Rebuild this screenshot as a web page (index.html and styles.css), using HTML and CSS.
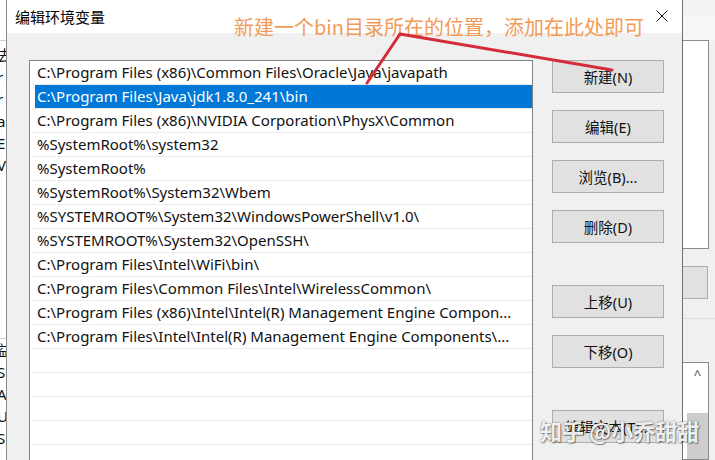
FILE: index.html
```html
<!DOCTYPE html>
<html lang="zh-CN">
<head>
  <meta charset="UTF-8" />
  <title>编辑环境变量</title>
  <link rel="stylesheet" href="styles.css">
</head>
<body>

  <div class="desktop">

    <!-- WINDOW BEHIND (LEFT EDGE) -->
    <div class="behind-left">
      <div class="behind-top"></div>
      <div class="frag cjk">去</div>
      <div class="frag">r</div>
      <div class="frag">r</div>
      <div class="frag">a</div>
      <div class="frag">E</div>
      <div class="frag">V</div>
      <div class="behind-gap"></div>
      <div class="frag cjk">益</div>
      <div class="frag">S</div>
      <div class="frag">A</div>
      <div class="frag">U</div>
      <div class="frag">S</div>
    </div>

    <!-- DIALOG -->
    <div class="dialog">
      <div class="titlebar">
        <span class="title">编辑环境变量</span>
        <span class="close">
          <svg width="12" height="12" viewBox="0 0 12 12">
            <path d="M0.5 0.5 L11.5 11.5 M11.5 0.5 L0.5 11.5" stroke="#111" stroke-width="1" fill="none" />
          </svg>
        </span>
      </div>

      <div class="dialog-body">
        <ul class="path-list">
          <li class="row"><span class="path">C:\Program Files (x86)\Common Files\Oracle\Java\javapath</span></li>
          <li class="row selected"><span class="path">C:\Program Files\Java\jdk1.8.0_241\bin</span></li>
          <li class="row"><span class="path">C:\Program Files (x86)\NVIDIA Corporation\PhysX\Common</span></li>
          <li class="row"><span class="path">%SystemRoot%\system32</span></li>
          <li class="row"><span class="path">%SystemRoot%</span></li>
          <li class="row"><span class="path">%SystemRoot%\System32\Wbem</span></li>
          <li class="row"><span class="path">%SYSTEMROOT%\System32\WindowsPowerShell\v1.0\</span></li>
          <li class="row"><span class="path">%SYSTEMROOT%\System32\OpenSSH\</span></li>
          <li class="row"><span class="path">C:\Program Files\Intel\WiFi\bin\</span></li>
          <li class="row"><span class="path">C:\Program Files\Common Files\Intel\WirelessCommon\</span></li>
          <li class="row"><span class="path">C:\Program Files (x86)\Intel\Intel(R) Management Engine Compon...</span></li>
          <li class="row"><span class="path">C:\Program Files\Intel\Intel(R) Management Engine Components\...</span></li>
          <li class="row"><span class="path"></span></li>
          <li class="row"><span class="path"></span></li>
          <li class="row"><span class="path"></span></li>
          <li class="row"><span class="path"></span></li>
          <li class="row"><span class="path"></span></li>
        </ul>

        <div class="actions">
          <button class="btn">新建(N)</button>
          <button class="btn">编辑(E)</button>
          <button class="btn">浏览(B)...</button>
          <button class="btn">删除(D)</button>
          <button class="btn btn-group">上移(U)</button>
          <button class="btn">下移(O)</button>
          <button class="btn btn-group">编辑文本(T)...</button>
        </div>
      </div>
    </div>

    <!-- WINDOW BEHIND (RIGHT EDGE) -->
    <div class="behind-right">
      <div class="behind-band"></div>
      <div class="behind-panel"></div>
      <div class="behind-button"></div>
      <div class="behind-rule"></div>
      <div class="behind-scrollbox">
        <span class="caret">^</span>
        <div class="thumb"></div>
      </div>
    </div>

    <!-- ANNOTATION -->
    <div class="note">新建一个bin目录所在的位置，添加在此处即可</div>
    <svg class="pointer" width="715" height="460" viewBox="0 0 715 460">
      <path d="M400 34 L367 83" stroke="#d62b3a" stroke-width="3" fill="none" stroke-linecap="round" />
      <path d="M400 34 L612 70" stroke="#d62b3a" stroke-width="3" fill="none" stroke-linecap="round" />
    </svg>

    <div class="watermark">知乎 @小乔甜甜</div>
  </div>

</body>
</html>
```

FILE: styles.css
```css
/* ---------------------------------------------
   GENERAL / RESET
--------------------------------------------- */
* {
  margin: 0;
  padding: 0;
  box-sizing: border-box;
}

body {
  font-family: "Noto Sans", "Noto Sans CJK SC", sans-serif;
  background: #ffffff;
  color: #000;
}

.desktop {
  position: relative;
  width: 715px;
  height: 460px;
  overflow: hidden;
  display: flex;
}

.cjk {
  font-family: "Noto Sans CJK SC", sans-serif;
}

/* ---------------------------------------------
   WINDOW BEHIND - LEFT EDGE
--------------------------------------------- */
.behind-left {
  width: 6px;
  flex-shrink: 0;
  overflow: hidden;
  background: #ffffff;
  font-size: 15px;
  color: #111;
}
.behind-top {
  height: 41px;
  border-bottom: 1px solid #cfcfcf;
  margin-bottom: 3px;
}
.frag {
  height: 22px;
  line-height: 22px;
  margin-left: -3px;
  white-space: nowrap;
}
.behind-gap {
  height: 163px;
  border-bottom: 1px solid #cfcfcf;
}

/* ---------------------------------------------
   DIALOG
--------------------------------------------- */
.dialog {
  width: 677px;
  flex-shrink: 0;
  border-left: 1px solid #8a8a8a;
  border-right: 1px solid #6f6f6f;
  background: #f0f0f0;
  display: flex;
  flex-direction: column;
}

.titlebar {
  height: 33px;
  flex-shrink: 0;
  background: #ffffff;
  display: flex;
  align-items: center;
  justify-content: space-between;
  padding: 0 14px 1px 8px;
}
.title {
  font-family: "Noto Sans CJK SC", sans-serif;
  font-size: 15px;
  color: #000;
}
.close {
  display: flex;
}

.dialog-body {
  flex: 1;
  min-height: 0;
  display: flex;
  gap: 19px;
  padding: 27px 18px 0 22px;
}

/* Path list box */
.path-list {
  list-style: none;
  width: 504px;
  height: 430px;
  flex-shrink: 0;
  background: #ffffff;
  border: 1px solid #828282;
  padding-left: 1px;
  overflow: hidden;
}
.row {
  display: flex;
  height: 24px;
  padding-left: 4px;
  border-bottom: 1px solid #ececec;
}
.path {
  flex: 1;
  padding-left: 2px;
  font-size: 15px;
  line-height: 23px;
  white-space: nowrap;
  overflow: hidden;
  color: #111;
}
.row.selected .path {
  background: #0078d7;
  color: #ffffff;
}

/* Button column */
.actions {
  display: flex;
  flex-direction: column;
  gap: 17px;
}
.btn {
  width: 112px;
  height: 33px;
  flex-shrink: 0;
  background: #e1e1e1;
  border: 1px solid #adadad;
  font-family: "Noto Sans", "Noto Sans CJK SC", sans-serif;
  font-size: 14.5px;
  color: #111;
}
.btn-group {
  margin-top: 25px;
}

/* ---------------------------------------------
   WINDOW BEHIND - RIGHT EDGE
--------------------------------------------- */
.behind-right {
  flex: 1;
  background: #f0f0f0;
  display: flex;
  flex-direction: column;
}
.behind-band {
  height: 40px;
  flex-shrink: 0;
  border-top: 17px solid #f3f3f3;
  background: #f7f7f7;
}
.behind-panel {
  width: 26px;
  height: 209px;
  flex-shrink: 0;
  background: #ffffff;
  border: 1px solid #8c8c8c;
  border-left: none;
}
.behind-button {
  width: 25px;
  height: 33px;
  flex-shrink: 0;
  margin-top: 17px;
  background: #e1e1e1;
  border: 1px solid #adadad;
  border-left: none;
}
.behind-rule {
  height: 20px;
  flex-shrink: 0;
  border-bottom: 1px solid #dcdcdc;
}
.behind-scrollbox {
  width: 26px;
  flex: 1;
  margin-top: 43px;
  background: #ffffff;
  border: 1px solid #8c8c8c;
  border-left: none;
  display: flex;
  flex-direction: column;
  align-items: flex-end;
}
.caret {
  width: 21px;
  text-align: center;
  font-size: 13px;
  line-height: 22px;
  color: #555;
}
.thumb {
  width: 21px;
  flex: 1;
  margin-top: 28px;
  background: #cdcdcd;
}

/* ---------------------------------------------
   ANNOTATION OVERLAY
--------------------------------------------- */
.note {
  position: absolute;
  left: 234px;
  top: 13px;
  font-family: "Noto Sans CJK SC", sans-serif;
  font-size: 20px;
  line-height: 28px;
  color: #f29b57;
  white-space: nowrap;
}
.pointer {
  position: absolute;
  left: 0;
  top: 0;
  pointer-events: none;
}

.watermark {
  position: absolute;
  left: 540px;
  top: 414px;
  font-family: "Noto Sans CJK SC", sans-serif;
  font-size: 22px;
  font-weight: bold;
  color: rgba(255, 255, 255, 0.92);
  text-shadow: 0 0 2px rgba(0, 0, 0, 0.55), 1px 1px 1px rgba(0, 0, 0, 0.35);
  white-space: nowrap;
}
```
